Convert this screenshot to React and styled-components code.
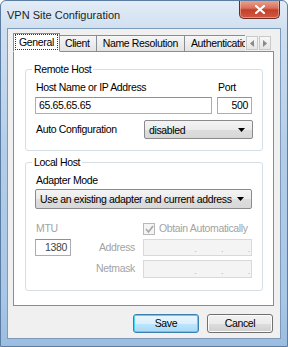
import React from 'react';
import styled, { createGlobalStyle, css } from 'styled-components';

const GlobalStyle = createGlobalStyle`
  html, body {
    margin: 0;
    padding: 0;
    background: #ffffff;
  }
  body {
    font-family: "Liberation Sans", Arial, sans-serif;
    font-size: 10.5px;
    letter-spacing: -0.35px;
    color: #000;
  }
  * { box-sizing: border-box; }
`;

const Window = styled.div`
  width: 288px;
  height: 347px;
  display: flex;
  flex-direction: column;
  background: linear-gradient(180deg, #e3ecf6 0px, #cfdff0 30px, #b3cde8 150px, #a8c6e6 300px, #9cbde0 347px);
  border: 1px solid #5b7da3;
  border-radius: 6px 6px 0 0;
  overflow: hidden;
`;

const TitleBar = styled.div`
  height: 27px;
  display: flex;
  justify-content: space-between;
  align-items: flex-start;
  padding-left: 6px;
`;

const Title = styled.div`
  font-size: 11px;
  letter-spacing: 0;
  line-height: 13px;
  margin-top: 8px;
  color: #1e1e1e;
`;

const CloseButton = styled.div`
  width: 41px;
  height: 19px;
  margin-top: -1px;
  margin-right: 7px;
  border: 1px solid #6b2a22;
  border-top: none;
  border-radius: 0 0 5px 5px;
  background: linear-gradient(180deg, #eaa898 0%, #d9705a 45%, #c53f29 55%, #cf5a44 100%);
  box-shadow: inset 0 0 0 1px rgba(255, 220, 210, 0.45);
  display: flex;
  align-items: center;
  justify-content: center;
`;

const Client = styled.div`
  flex: 1;
  margin: 0 6px 7px 6px;
  background: #f0f0f0;
  border: 1px solid #7d9ab9;
  display: flex;
  flex-direction: column;
  padding: 4px 7px 0 5px;
`;

const TabHeader = styled.div`
  display: flex;
  align-items: flex-end;
  height: 19px;
  position: relative;
  z-index: 1;
  margin-bottom: -1px;
`;

const TabClip = styled.div`
  display: flex;
  align-items: flex-end;
  width: 232px;
  height: 19px;
  overflow: hidden;
`;

const Tab = styled.div`
  flex: none;
  height: 17px;
  padding: 0 6px;
  line-height: 15px;
  border: 1px solid #898c95;
  border-left: none;
  background: linear-gradient(180deg, #f6f6f6, #e3e3e3);
  color: #000;
  white-space: nowrap;

  ${(p) =>
    p.$active &&
    css`
      height: 19px;
      padding: 1px 2px 0 2px;
      border-left: 1px solid #898c95;
      border-bottom: 1px solid #ffffff;
      background: #ffffff;
      margin-right: -1px;
      position: relative;
    `}
`;

const FocusText = styled.span`
  display: inline-block;
  padding: 0 3px;
  line-height: 14px;
  outline: 1px dotted #333;
  outline-offset: 0;
`;

const Scroller = styled.div`
  display: flex;
  gap: 1px;
  margin-left: 1px;
  margin-bottom: 2px;
`;

const ScrollButton = styled.div`
  width: 12px;
  height: 14px;
  border: 1px solid #c9c9c9;
  background: linear-gradient(180deg, #f7f7f7, #e6e6e6);
  display: flex;
  align-items: center;
  justify-content: center;
`;

const Panel = styled.div`
  height: 255px;
  width: 261px;
  background: #ffffff;
  border: 1px solid #898c95;
  padding: 17px 0 0 11px;
`;

const Group = styled.div`
  position: relative;
  width: 238px;
  height: ${(p) => p.$height}px;
  margin-top: ${(p) => p.$top || 0}px;
  border: 1px solid #d5dfe5;
  border-radius: 3px;
  padding: 11px 9px 0 9px;
`;

const Legend = styled.span`
  position: absolute;
  top: -7px;
  left: 6px;
  padding: 0 2px;
  background: #ffffff;
  line-height: 13px;
  color: #000;
`;

const Label = styled.div`
  line-height: 13px;
  padding-left: 1px;
  color: ${(p) => (p.$disabled ? '#a3a3a3' : '#000')};
  text-align: ${(p) => (p.$right ? 'right' : 'left')};
`;

const HostGrid = styled.div`
  display: grid;
  grid-template-columns: 177px 35px;
  column-gap: 5px;
  row-gap: 3px;
  align-items: end;
`;

const TextBox = styled.div`
  height: ${(p) => p.$h || 17}px;
  border: 1px solid #abadb3;
  border-top-color: #8e9095;
  background: #ffffff;
  line-height: ${(p) => (p.$h || 17) - 2}px;
  padding: 0 3px;
  color: ${(p) => (p.$dim ? '#444' : '#000')};
  text-align: ${(p) => (p.$right ? 'right' : 'left')};
`;

const ConfigRow = styled.div`
  display: flex;
  align-items: center;
  margin-top: 6px;
  justify-content: space-between;
`;

const Select = styled.div`
  width: ${(p) => p.$w}px;
  height: ${(p) => p.$h}px;
  margin-top: ${(p) => p.$top || 0}px;
  border: 1px solid #8a8a8a;
  border-radius: 2px;
  background: linear-gradient(180deg, #f4f4f4 0%, #ebebeb 50%, #dddddd 51%, #d8d8d8 100%);
  display: flex;
  align-items: center;
  justify-content: space-between;
  padding: 0 7px 0 4px;
  line-height: 14px;
`;

const LowerGrid = styled.div`
  display: grid;
  grid-template-columns: 36px 72px 109px;
  grid-template-rows: 13px 17px 17px;
  row-gap: 4px;
  margin-top: 13px;
  align-items: center;
`;

const CheckCell = styled.div`
  display: flex;
  align-items: center;
  gap: 4px;
  color: #a3a3a3;
  line-height: 13px;
`;

const CheckBox = styled.div`
  width: 12px;
  height: 12px;
  border: 1px solid #b8b8b8;
  background: #f4f4f4;
  display: flex;
  align-items: center;
  justify-content: center;
`;

const RightLabel = styled(Label)`
  padding-right: 8px;
`;

const IpField = styled.div`
  height: ${(p) => p.$h}px;
  border: 1px solid #d9d9d9;
  background: #f4f4f4;
  display: grid;
  grid-template-columns: repeat(4, 1fr);
  align-items: end;
  padding-bottom: 3px;
`;

const IpDot = styled.span`
  color: #b0b0b0;
  font-size: 9px;
  line-height: 6px;
  text-align: right;
  padding-right: 1px;
`;

const ButtonRow = styled.div`
  display: flex;
  justify-content: flex-end;
  gap: 8px;
  margin-top: 8px;
`;

const Button = styled.div`
  width: 66px;
  height: 19px;
  border: 1px solid #707070;
  border-radius: 3px;
  background: linear-gradient(180deg, #f2f2f2 0%, #ebebeb 50%, #dddddd 51%, #cfcfcf 100%);
  box-shadow: inset 0 0 0 1px #fbfbfb;
  text-align: center;
  line-height: 17px;
  color: #000;

  ${(p) =>
    p.$default &&
    css`
      border-color: #3c7fb1;
      background: linear-gradient(180deg, #eaf6fd 0%, #d9f0fc 50%, #bee6fd 51%, #a7d9f5 100%);
      box-shadow: inset 0 0 0 1px #48d5fb;
    `}
`;

const Arrow = ({ color = '#000' }) => (
  <svg width="7" height="4" viewBox="0 0 7 4">
    <path d="M0 0h7L3.5 4z" fill={color} />
  </svg>
);

const Side = ({ dir }) => (
  <svg width="4" height="7" viewBox="0 0 4 7">
    <path d={dir === 'left' ? 'M4 0v7L0 3.5z' : 'M0 0v7l4-3.5z'} fill="#8a8a8a" />
  </svg>
);

const IpBox = ({ h }) => (
  <IpField $h={h}>
    <span />
    <IpDot>.</IpDot>
    <IpDot>.</IpDot>
    <IpDot>.</IpDot>
  </IpField>
);

const tabs = ['General', 'Client', 'Name Resolution', 'Authentication'];

const App = () => (
  <>
    <GlobalStyle />
    <Window>
      <TitleBar>
        <Title>VPN Site Configuration</Title>
        <CloseButton>
          <svg width="10" height="9" viewBox="0 0 10 9">
            <path d="M1 1l8 7M9 1l-8 7" stroke="#ffffff" strokeWidth="2.2" strokeLinecap="square" />
          </svg>
        </CloseButton>
      </TitleBar>
      <Client>
        <TabHeader>
          <TabClip>
            {tabs.map((t, i) =>
              i === 0 ? (
                <Tab key={t} $active>
                  <FocusText>{t}</FocusText>
                </Tab>
              ) : (
                <Tab key={t}>{t}</Tab>
              )
            )}
          </TabClip>
          <Scroller>
            <ScrollButton>
              <Side dir="left" />
            </ScrollButton>
            <ScrollButton>
              <Side dir="right" />
            </ScrollButton>
          </Scroller>
        </TabHeader>
        <Panel>
          <Group $height={82}>
            <Legend>Remote Host</Legend>
            <HostGrid>
              <Label>Host Name or IP Address</Label>
              <Label>Port</Label>
              <TextBox>65.65.65.65</TextBox>
              <TextBox $right>500</TextBox>
            </HostGrid>
            <ConfigRow>
              <Label>Auto Configuration</Label>
              <Select $w={109} $h={19}>
                <span>disabled</span>
                <Arrow />
              </Select>
            </ConfigRow>
          </Group>
          <Group $height={129} $top={11}>
            <Legend>Local Host</Legend>
            <Label>Adapter Mode</Label>
            <Select $w={217} $h={20} $top={2}>
              <span>Use an existing adapter and current address</span>
              <Arrow />
            </Select>
            <LowerGrid>
              <Label $disabled style={{ gridColumn: '1 / 3' }}>MTU</Label>
              <CheckCell>
                <CheckBox>
                  <svg width="9" height="8" viewBox="0 0 9 8">
                    <path d="M1 4l2.5 3L8 1" stroke="#a8a8a8" strokeWidth="1.6" fill="none" />
                  </svg>
                </CheckBox>
                Obtain Automatically
              </CheckCell>
              <TextBox $h={17} $right $dim>1380</TextBox>
              <RightLabel $disabled $right>Address</RightLabel>
              <IpBox h={17} />
              <span />
              <RightLabel $disabled $right>Netmask</RightLabel>
              <IpBox h={18} />
            </LowerGrid>
          </Group>
        </Panel>
        <ButtonRow>
          <Button $default>Save</Button>
          <Button>Cancel</Button>
        </ButtonRow>
      </Client>
    </Window>
  </>
);

export default App;
